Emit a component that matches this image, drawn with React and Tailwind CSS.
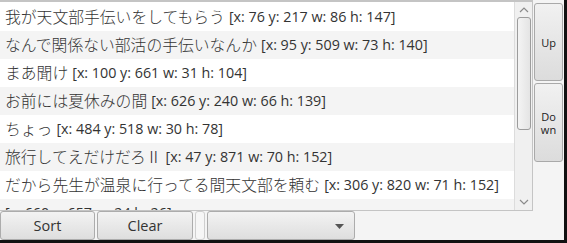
import React from 'react';

const rows = [
    ['我が天文部手伝いをしてもらう', '[x: 76 y: 217 w: 86 h: 147]'],
    ['なんで関係ない部活の手伝いなんか', '[x: 95 y: 509 w: 73 h: 140]'],
    ['まあ聞け', '[x: 100 y: 661 w: 31 h: 104]'],
    ['お前には夏休みの間', '[x: 626 y: 240 w: 66 h: 139]'],
    ['ちょっ', '[x: 484 y: 518 w: 30 h: 78]'],
    ['旅行してえだけだろⅡ', '[x: 47 y: 871 w: 70 h: 152]'],
    ['だから先生が温泉に行ってる間天文部を頼む', '[x: 306 y: 820 w: 71 h: 152]'],
    ['', '[x: 660 y: 657 w: 24 h: 26]'],
];

const latin = { fontFamily: '"Open Sans", "Noto Sans CJK JP", sans-serif' };
const jp = { fontFamily: '"Noto Sans CJK JP", sans-serif' };

function Chevron({ down }) {
    return (
        <svg width="10" height="6" viewBox="0 0 10 6" className="block">
            <path
                d={down ? 'M1 1 L5 5 L9 1' : 'M1 5 L5 1 L9 5'}
                fill="none"
                stroke="#8a8a8a"
                strokeWidth="1.2"
            />
        </svg>
    );
}

function SideButton({ children, className = '' }) {
    return (
        <div
            className={`flex items-center justify-center text-center rounded-[3px] border border-[#a9a9a9] bg-gradient-to-b from-[#f1f1f1] to-[#dcdcdc] text-[11px] leading-[13px] text-[#222] ${className}`}
        >
            {children}
        </div>
    );
}

function BarButton({ children, className = '' }) {
    return (
        <div
            className={`h-[29px] pt-[1px] flex items-center justify-center rounded-[3px] border border-[#acacac] bg-gradient-to-b from-[#f3f3f3] to-[#dedede] text-[14.5px] text-[#333] ${className}`}
        >
            {children}
        </div>
    );
}

export default function App() {
    return (
        <div className="w-[567px] h-[243px] overflow-hidden bg-[#f4f4f4] border-r-[3px] border-b-[3px] border-[#111]" style={latin}>
            <div className="flex h-[211px]">
                <div className="w-[533px] h-[211px] flex border-t-[2px] border-r border-b border-[#c4c4c4] bg-white">
                    <div className="flex-1 pt-[1px] overflow-hidden">
                        {rows.map(([j, l], i) => (
                            <div
                                key={i}
                                className={`h-[28px] pl-[5px] flex items-center whitespace-nowrap text-[#333] ${i % 2 ? 'bg-[#f4f4f4]' : 'bg-white'}`}
                            >
                                {j && (
                                    <span className="text-[15.8px] font-light mr-[4px] [font-feature-settings:'fwid']" style={jp}>
                                        {j}
                                    </span>
                                )}
                                <span className="text-[14.3px]">{l}</span>
                            </div>
                        ))}
                    </div>
                    <div className="w-[18px] flex flex-col items-center bg-[#f0f0f0] border-l border-[#dcdcdc]">
                        <div className="h-[15px] flex items-center justify-center">
                            <Chevron />
                        </div>
                        <div className="w-[14px] h-[113px] rounded-[3px] border border-[#9c9c9c] bg-gradient-to-r from-[#f4f4f4] to-[#e4e4e4]"></div>
                        <div className="flex-1"></div>
                        <div className="h-[16px] flex items-center justify-center">
                            <Chevron down />
                        </div>
                    </div>
                </div>
                <div className="flex-1 flex flex-col gap-[2px] pt-[3px] pl-[1px] pr-[1px]">
                    <SideButton className="h-[78px]">Up</SideButton>
                    <SideButton className="h-[79px]">
                        Do
                        <br />
                        wn
                    </SideButton>
                </div>
            </div>
            <div className="flex gap-[2px] h-[29px]">
                <BarButton className="w-[95px]">Sort</BarButton>
                <BarButton className="w-[96px]">Clear</BarButton>
                <div className="w-[10px] h-[29px] rounded-[3px] border border-[#cfcfcf] bg-[#f6f6f6]"></div>
                <BarButton className="w-[148px] justify-end pr-[10px]">
                    <svg width="9" height="5" viewBox="0 0 9 5">
                        <path d="M0 0 L9 0 L4.5 5 Z" fill="#555" />
                    </svg>
                </BarButton>
            </div>
        </div>
    );
}
